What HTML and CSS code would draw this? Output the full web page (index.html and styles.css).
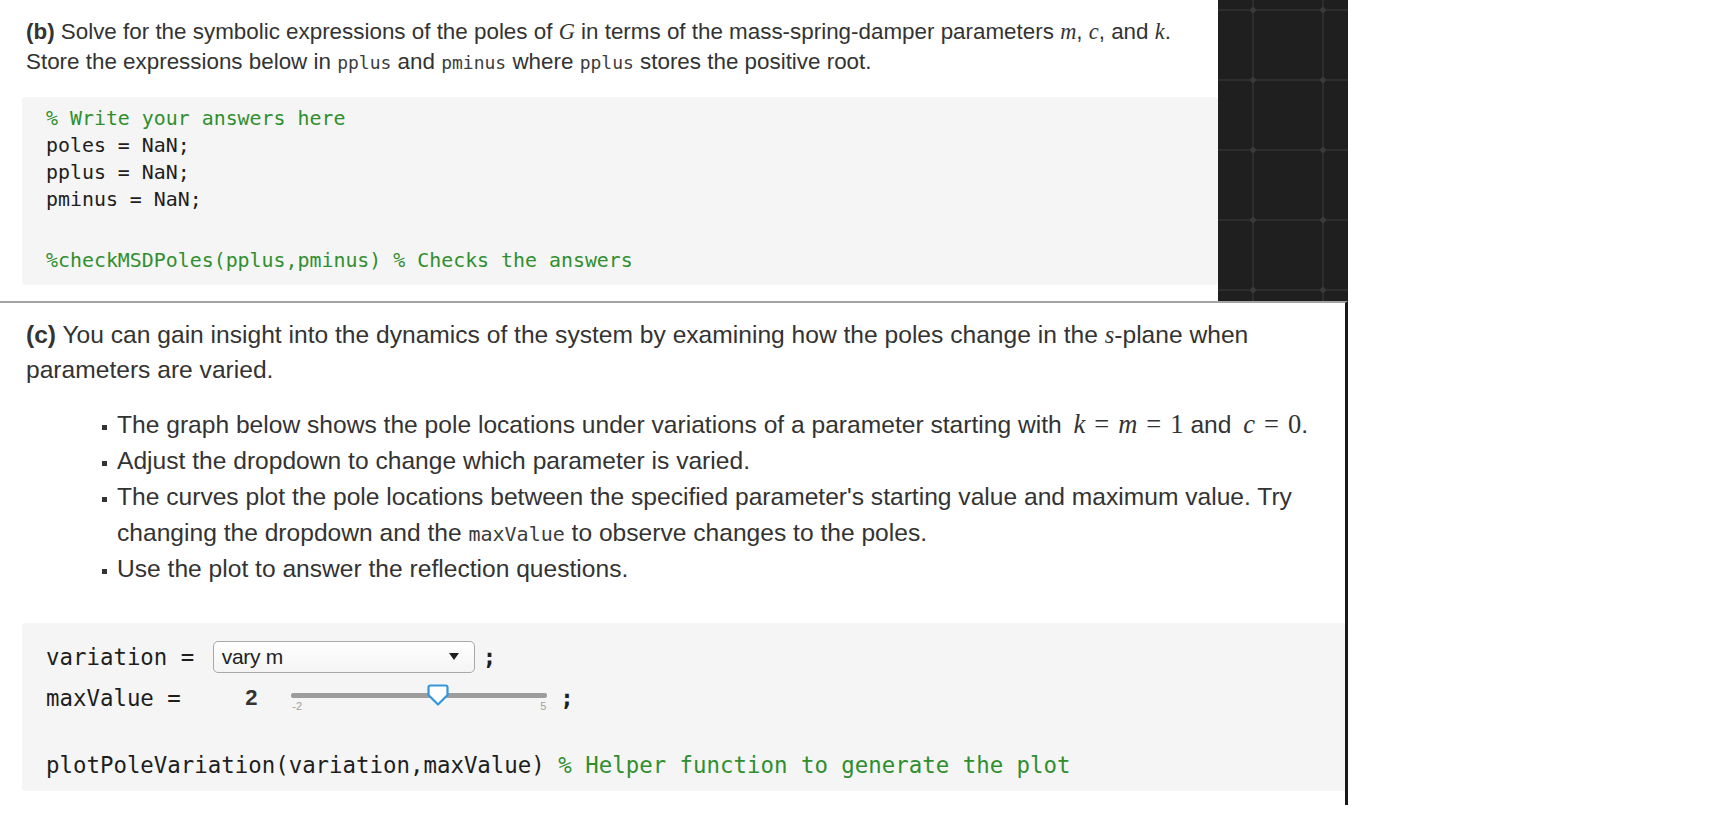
FILE: index.html
```html
<!DOCTYPE html>
<html>
<head>
<meta charset="utf-8">
<title>Live Script</title>
<link rel="stylesheet" href="styles.css">
</head>
<body>
<div class="page">
  <section class="top">
    <div class="top-main">
      <p class="intro"><b>(b)</b> Solve for the symbolic expressions of the poles of <i class="mi">G</i> in terms of the mass-spring-damper parameters <i class="mi">m</i>, <i class="mi">c</i>, and <i class="mi">k</i>.<br>Store the expressions below in <code class="ic">pplus</code> and <code class="ic">pminus</code> where <code class="ic">pplus</code> stores the positive root.</p>
      <div class="code code-top">
        <div class="ln cm">% Write your answers here</div>
        <div class="ln">poles = NaN;</div>
        <div class="ln">pplus = NaN;</div>
        <div class="ln">pminus = NaN;</div>
        <div class="ln blank"></div>
        <div class="ln cm">%checkMSDPoles(pplus,pminus) % Checks the answers</div>
      </div>
    </div>
    <div class="panel"></div>
  </section>
  <section class="bottom">
    <p class="lead"><b>(c)</b> You can gain insight into the dynamics of the system by examining how the poles change in the <i class="mi">s</i>-plane when parameters are varied.</p>
    <ul class="bullets">
      <li><span class="txt">The graph below shows the pole locations under variations of a parameter starting with <span class="math"><i>k</i><span class="op">=</span><i>m</i><span class="op">=</span>1</span> and <span class="math"><i>c</i><span class="op">=</span>0</span>.</span></li>
      <li><span class="txt">Adjust the dropdown to change which parameter is varied.</span></li>
      <li><span class="txt">The curves plot the pole locations between the specified parameter's starting value and maximum value. Try changing the dropdown and the <code class="ic">maxValue</code> to observe changes to the poles.</span></li>
      <li><span class="txt">Use the plot to answer the reflection questions.</span></li>
    </ul>
    <div class="code code-bottom">
      <div class="row r1"><span class="src">variation = </span><div class="dropdown"><span class="dd-text">vary m</span><span class="caret"></span></div><span class="semi">;</span></div>
      <div class="row r2"><span class="src">maxValue = </span><span class="num">2</span><div class="slider"><div class="track"></div><svg class="thumb" style="left:57.4%" width="24" height="24" viewBox="0 0 24 24"><path d="M4.5 2.5 H19.5 Q21.5 2.5 21.5 4.5 V12 L12 21.5 L2.5 12 V4.5 Q2.5 2.5 4.5 2.5 Z" fill="#fff" stroke="#3497db" stroke-width="2.2" stroke-linejoin="round"/></svg><div class="ticks"><span>-2</span><span>5</span></div></div><span class="semi semi2">;</span></div>
      <div class="row blank"></div>
      <div class="row"><span class="src">plotPoleVariation(variation,maxValue) </span><span class="src cm">% Helper function to generate the plot</span></div>
    </div>
  </section>
</div>
</body>
</html>
```

FILE: styles.css
```css
* { box-sizing: border-box; }

html, body {
  margin: 0;
  padding: 0;
  background: #ffffff;
}

body {
  width: 1718px;
  height: 831px;
  overflow: hidden;
  font-family: "Liberation Sans", Arial, sans-serif;
  color: #333333;
}

.page {
  width: 1348px;
}

/* ---------- top part ---------- */
.top {
  display: flex;
  height: 301px;
}

.top-main {
  width: 1218px;
  flex: none;
  padding-left: 22px;
  overflow: hidden;
}

.intro {
  margin: 0 0 19px 0;
  padding: 17px 0 0 4px;
  font-size: 22.4px;
  line-height: 30px;
  white-space: nowrap;
}

.mi {
  font-family: "Liberation Serif", "Times New Roman", serif;
  font-style: italic;
}

.ic {
  font-family: "DejaVu Sans Mono", "Liberation Mono", monospace;
  font-size: 18px;
  color: #3c3c3c;
}

.code {
  background: #f5f5f5;
  border-radius: 4px;
  font-family: "DejaVu Sans Mono", "Liberation Mono", monospace;
  color: #1e1e1e;
}

.ln, .src {
  white-space: pre;
}

.code-top {
  height: 188px;
  padding: 8px 0 0 24px;
  font-size: 19.9px;
  line-height: 27px;
}

.code-top .blank { height: 34px; }

.cm { color: #2f8f2f; }

.panel {
  width: 130px;
  height: 301px;
  flex: none;
  background-color: #1f1f1f;
  background-image:
    radial-gradient(circle, #3a3a3a 2.5px, transparent 3px),
    linear-gradient(to right, #2d2d2d 2px, transparent 2px),
    linear-gradient(to bottom, #2d2d2d 2px, transparent 2px);
  background-size: 70px 70px;
  background-position: 0 -25px, 34px 9px, 34px 9px;
}

/* ---------- bottom part ---------- */
.bottom {
  width: 1348px;
  height: 504px;
  border-top: 2px solid #a3a3a3;
  border-right: 3px solid #1a1a1a;
  padding: 14px 0 0 26px;
}

.lead {
  margin: 0;
  font-size: 24.6px;
  line-height: 35px;
  padding-right: 60px;
}

.bullets {
  list-style: none;
  margin: 20px 0 0 0;
  padding: 0 10px 0 91px;
  font-size: 24.6px;
  line-height: 36px;
}

.bullets li {
  display: flex;
  align-items: flex-start;
}

.bullets li::before {
  content: "";
  flex: none;
  width: 5px;
  height: 5px;
  background: #333333;
  margin: 17.5px 10px 0 -15px;
}

.bullets .txt { flex: 1; }

.bullets .ic { font-size: 20px; line-height: 20px; }

.math {
  font-family: "Liberation Serif", "Times New Roman", serif;
  font-size: 26.5px;
  line-height: 20px;
  margin-left: 5px;
}

.math i { font-style: italic; }

.op { margin: 0 9px; }

.code-bottom {
  margin: 36px 0 0 -4px;
  height: 168px;
  padding: 14px 0 0 24px;
  font-size: 22.4px;
  border-radius: 4px 0 0 4px;
}

.row {
  display: flex;
  align-items: center;
  line-height: 30px;
}

.r1 { height: 39px; }
.r2 { height: 44px; }
.row.blank { height: 30px; }

.dropdown {
  width: 262px;
  height: 32px;
  margin-left: 5px;
  display: flex;
  align-items: center;
  justify-content: space-between;
  padding: 0 15px 0 8px;
  border: 1px solid #a8a8a8;
  border-radius: 5px;
  background: linear-gradient(#ffffff, #f4f4f4);
  white-space: nowrap;
}

.dd-text {
  font-family: "Liberation Sans", Arial, sans-serif;
  font-size: 21px;
  color: #222222;
  letter-spacing: -0.3px;
}

.caret {
  width: 0;
  height: 0;
  border-left: 5.5px solid transparent;
  border-right: 5.5px solid transparent;
  border-top: 7px solid #1e1e1e;
  margin-top: -1px;
}

.semi { margin-left: 8px; font-weight: bold; }

.num {
  width: 40px;
  margin-left: 37px;
  text-align: center;
  font-family: "Liberation Sans", Arial, sans-serif;
  font-size: 22px;
  font-weight: bold;
  color: #333333;
}

.slider {
  position: relative;
  width: 256px;
  height: 44px;
  margin-left: 20px;
  padding-top: 17px;
}

.track {
  height: 5px;
  background: #9d9d9d;
  border-radius: 2px;
}

.thumb {
  position: absolute;
  top: 7px;
  transform: translateX(-50%);
}

.ticks {
  display: flex;
  justify-content: space-between;
  margin-top: 2px;
  padding: 0 1px;
  font-family: "Liberation Sans", Arial, sans-serif;
  font-size: 11px;
  line-height: 12px;
  color: #a0a0a0;
}

.semi2 { margin-left: 13px; }
```
